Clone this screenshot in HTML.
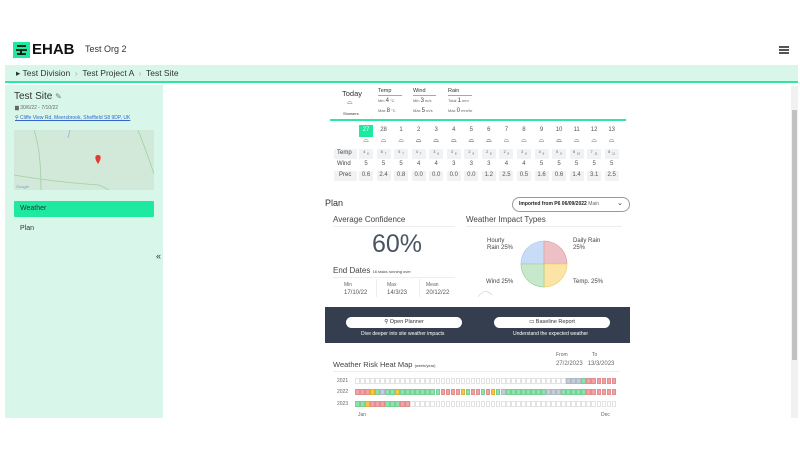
<!DOCTYPE html>
<html><head><meta charset="utf-8"><style>
*{margin:0;padding:0;box-sizing:border-box}
body{width:800px;height:450px;background:#fff;font-family:"Liberation Sans",sans-serif;color:#444;position:relative;overflow:hidden}
.a{position:absolute;white-space:nowrap}
.s{font-size:5px;color:#666}
.hm{position:absolute;left:355px;display:flex;height:6px}
.hm i{display:block;width:4.6px;height:6px;margin-right:0.45px;border:0.6px solid #e2e2e2;background:#fff}
.hm i.r{background:#f2a2a2;border-color:#e08e8e}
.hm i.g{background:#8ee3ac;border-color:#76cf95}
.hm i.y{background:#f5c842;border-color:#e0b030}
.hm i.b{background:#c5cdd9;border-color:#b0b9c6}
.col{position:absolute;width:14px;text-align:center;font-size:6px;color:#555}
.cell{position:absolute;width:14px;height:10px;background:#f1f2f4;border-radius:1px}
</style></head><body>
<!-- header -->
<div class="a" style="left:13px;top:42px;width:17px;height:16px;background:#1de9a0"></div>
<svg class="a" style="left:13px;top:42px" width="17" height="16"><path d="M4 4H13M3 8H14M4 12H13M8 8V13" stroke="#111" stroke-width="1.8" fill="none"/></svg>
<div class="a" style="left:32px;top:41px;font-size:15px;font-weight:bold;color:#111">EHAB</div>
<div class="a" style="left:85px;top:44px;font-size:9px;color:#333">Test Org 2</div>
<div class="a" style="left:779px;top:46px;width:10px;height:1.5px;background:#555;box-shadow:0 3px 0 #555,0 6px 0 #555"></div>
<!-- breadcrumb -->
<div class="a" style="left:5px;top:65px;width:793px;height:18px;background:#d8f7ea;border-bottom:2px solid #2ee6a2"></div>
<div class="a" style="left:16px;top:68px;font-size:8.5px;color:#333">▸ Test Division &nbsp;<span style="color:#aaa">›</span>&nbsp; Test Project A &nbsp;<span style="color:#aaa">›</span>&nbsp; Test Site</div>
<!-- sidebar -->
<div class="a" style="left:5px;top:85px;width:158px;height:333px;background:#d8f7ea"></div>
<div class="a" style="left:14px;top:91px;font-size:10px;color:#333">Test Site <span style="font-size:8px;color:#777">✎</span></div>
<div class="a s" style="left:15px;top:105px">▆ 30/6/22 - 7/10/22</div>
<div class="a s" style="left:15px;top:115px;color:#3366cc;text-decoration:underline"><span style="color:#555;text-decoration:none">⚲</span> Cliffe View Rd, Meersbrook, Sheffield S8 9DP, UK</div>
<div class="a" style="left:14px;top:130px;width:140px;height:60px;background:#d2e8d8;overflow:hidden">
<svg width="140" height="60"><path d="M20 0 Q27 20 27 60" stroke="#9fd0a6" fill="none" stroke-width="0.8"/><path d="M0 45 Q40 52 85 55 L95 60" stroke="#9fd0a6" fill="none" stroke-width="0.8"/><path d="M124 0 Q132 20 140 44" stroke="#9fd0a6" fill="none" stroke-width="0.8"/><path d="M56 0 L54 8" stroke="#8ab4e8" stroke-width="0.8"/><path d="M84 34 C80 28 81 25 84 25 C87 25 88 28 84 34Z" fill="#e53935"/><text x="2" y="58" font-size="4" fill="#7a9ad8" font-family="Liberation Sans">Google</text></svg></div>
<div class="a" style="left:14px;top:201px;width:140px;height:16px;background:#1de9a0;border-radius:1px"></div>
<div class="a" style="left:20px;top:205px;font-size:7px;color:#333">Weather</div>
<div class="a" style="left:20px;top:225px;font-size:7px;color:#333">Plan</div>
<div class="a" style="left:156px;top:251px;font-size:9px;color:#333">«</div>
<!-- scrollbar -->
<div class="a" style="left:791px;top:86px;width:7px;height:332px;background:#f1f1f1"></div>
<div class="a" style="left:792px;top:110px;width:5px;height:250px;background:#c1c1c1"></div>
<!-- today -->
<div class="a" style="left:342px;top:89px;font-size:7.5px;color:#333">Today</div>
<div class="a" style="left:347px;top:99px;font-size:7px;color:#777">⌓</div>
<div class="a" style="left:343px;top:111px;font-size:4px;color:#333">Showers</div>
<div class="a" style="left:378px;top:88px;font-size:5.5px;color:#333">Temp</div>
<div class="a" style="left:378px;top:95px;width:24px;height:1px;background:#2ee6a2"></div>
<div class="a s" style="left:378px;top:98px;font-size:4px">Min <span style="font-size:6px;color:#444">4</span> °C</div>
<div class="a s" style="left:378px;top:108px;font-size:4px">Max <span style="font-size:6px;color:#444">8</span> °C</div>
<div class="a" style="left:413px;top:88px;font-size:5.5px;color:#333">Wind</div>
<div class="a" style="left:413px;top:95px;width:23px;height:1px;background:#2ee6a2"></div>
<div class="a s" style="left:413px;top:98px;font-size:4px">Min <span style="font-size:6px;color:#444">3</span> m/s</div>
<div class="a s" style="left:413px;top:108px;font-size:4px">Max <span style="font-size:6px;color:#444">5</span> m/s</div>
<div class="a" style="left:448px;top:88px;font-size:5.5px;color:#333">Rain</div>
<div class="a" style="left:448px;top:95px;width:24px;height:1px;background:#2ee6a2"></div>
<div class="a s" style="left:448px;top:98px;font-size:4px">Total <span style="font-size:6px;color:#444">1</span> mm</div>
<div class="a s" style="left:448px;top:108px;font-size:4px">Max <span style="font-size:6px;color:#444">0</span> mm/hr</div>
<div class="a" style="left:330px;top:119px;width:296px;height:1.5px;background:#2ee6a2"></div>
<!-- grid -->
<div class="a" style="left:359px;top:125px;width:14px;height:12px;background:#1de9a0"></div>
<div class="cell" style="left:334px;top:149px;width:23px"></div>
<div class="cell" style="left:334px;top:171px;width:23px"></div>
<div class="a" style="left:337px;top:150px;font-size:6px">Temp</div>
<div class="a" style="left:337px;top:161px;font-size:6px">Wind</div>
<div class="a" style="left:339px;top:172px;font-size:6px">Prec</div>
<div id="g"></div>
<!-- plan -->
<div class="a" style="left:325px;top:198px;font-size:9px;color:#333">Plan</div>
<div class="a" style="left:512px;top:197px;width:118px;height:15px;border:1px solid #999;border-radius:8px"></div>
<div class="a" style="left:519px;top:201px;font-size:5px;font-weight:bold;color:#222">Imported from P6 06/09/2022 <span style="font-weight:normal;color:#666">Main</span></div>
<div class="a" style="left:617px;top:199px;font-size:7px;color:#333">⌄</div>
<div class="a" style="left:333px;top:215px;font-size:8px;color:#444">Average Confidence</div>
<div class="a" style="left:333px;top:226px;width:122px;height:1px;background:#eee"></div>
<div class="a" style="left:372px;top:230px;font-size:25px;color:#4a5362">60%</div>
<div class="a" style="left:333px;top:266px;font-size:8px;color:#444">End Dates <span style="font-size:4px">16 tasks running over</span></div>
<div class="a" style="left:333px;top:277px;width:122px;height:1px;background:#eee"></div>
<div class="a" style="left:376px;top:279px;width:1px;height:18px;background:#eee"></div>
<div class="a" style="left:419px;top:279px;width:1px;height:18px;background:#eee"></div>
<div class="a s" style="left:344px;top:282px">Min</div><div class="a s" style="left:387px;top:282px">Max</div><div class="a s" style="left:426px;top:282px">Mean</div>
<div class="a" style="left:344px;top:290px;font-size:6px;color:#555">17/10/22</div>
<div class="a" style="left:387px;top:290px;font-size:6px;color:#555">14/3/23</div>
<div class="a" style="left:426px;top:290px;font-size:6px;color:#555">20/12/22</div>
<div class="a" style="left:466px;top:215px;font-size:8px;color:#444">Weather Impact Types</div>
<div class="a" style="left:466px;top:226px;width:156px;height:1px;background:#eee"></div>
<svg class="a" style="left:470px;top:235px" width="150" height="65"><path d="M74 29 V6 A23 23 0 0 0 51 29Z" fill="#c8dcf8" stroke="#a8c4ee" stroke-width="0.6"/><path d="M74 29 V6 A23 23 0 0 1 97 29Z" fill="#ecc0c4" stroke="#d89aa0" stroke-width="0.6"/><path d="M74 29 H97 A23 23 0 0 1 74 52Z" fill="#fbe4a6" stroke="#f0cc60" stroke-width="0.6"/><path d="M74 29 V52 A23 23 0 0 1 51 29Z" fill="#c8e8cc" stroke="#8ccf96" stroke-width="0.6"/><path d="M8 62 Q15 52 22 60" stroke="#ccc" fill="none" stroke-width="0.6"/></svg>
<div class="a" style="left:487px;top:238px;font-size:6px;line-height:7px;color:#444">Hourly<br>Rain 25%</div>
<div class="a" style="left:573px;top:238px;font-size:6px;line-height:7px;color:#444">Daily Rain<br>25%</div>
<div class="a" style="left:486px;top:279px;font-size:6px;color:#444">Wind 25%</div>
<div class="a" style="left:573px;top:279px;font-size:6px;color:#444">Temp. 25%</div>
<!-- dark panel -->
<div class="a" style="left:325px;top:307px;width:305px;height:36px;background:#353e4e"></div>
<div class="a" style="left:346px;top:317px;width:116px;height:11px;background:#fff;border-radius:6px;font-size:5.5px;text-align:center;line-height:11px;color:#333">⚲ Open Planner</div>
<div class="a" style="left:494px;top:317px;width:116px;height:11px;background:#fff;border-radius:6px;font-size:5.5px;text-align:center;line-height:11px;color:#333">▭ Baseline Report</div>
<div class="a" style="left:361px;top:331px;font-size:5px;color:#fff">Dive deeper into site weather impacts</div>
<div class="a" style="left:513px;top:331px;font-size:5px;color:#fff">Understand the expected weather</div>
<!-- heat map -->
<div class="a" style="left:333px;top:360px;font-size:7.5px;color:#444">Weather Risk Heat Map <span style="font-size:4px">(week/year)</span></div>
<div class="a s" style="left:556px;top:352px">From</div><div class="a s" style="left:592px;top:352px">To</div>
<div class="a" style="left:556px;top:361px;font-size:6px;color:#666">27/2/2023 &nbsp; 13/3/2023</div>
<div class="a" style="left:333px;top:371px;width:287px;height:1px;background:#eee"></div>
<div class="a s" style="left:337px;top:378px">2021</div>
<div class="a s" style="left:337px;top:389px">2022</div>
<div class="a s" style="left:337px;top:401px">2023</div>
<div class="hm" style="top:378px" id="h1"></div>
<div class="hm" style="top:389px" id="h2"></div>
<div class="hm" style="top:401px" id="h3"></div>
<div class="a s" style="left:358px;top:412px">Jan</div>
<div class="a s" style="left:601px;top:412px">Dec</div>
<script>
var d=["27","28","1","2","3","4","5","6","7","8","9","10","11","12","13"];
var t=[[4,8],[8,7],[5,7],[4,7],[3,8],[3,8],[2,8],[2,8],[2,8],[3,8],[4,8],[5,9],[8,10],[7,11],[8,11]];
var w=[5,5,5,4,4,3,3,3,4,4,5,5,5,5,5];
var p=["0.6","2.4","0.8","0.0","0.0","0.0","0.0","1.2","2.5","0.5","1.6","0.6","1.4","3.1","2.5"];
var dark=[0,0,0,1,1,1,1,1,0,0,0,1,0,0,0];
var h="";
for(var i=0;i<15;i++){var x=359+i*17.55;
h+='<div class="col" style="left:'+x+'px;top:127px;color:'+(i?'#555':'#fff')+'">'+d[i]+'</div>';
h+='<div class="col" style="left:'+x+'px;top:137px;font-size:7px;color:'+(dark[i]?'#444':'#777')+'">⌓</div>';
h+='<div class="cell" style="left:'+x+'px;top:149px"></div>';
h+='<div class="col" style="left:'+x+'px;top:150px;font-size:3.5px">'+t[i][0]+'&nbsp;&nbsp;<sub>'+t[i][1]+'</sub></div>';
h+='<div class="col" style="left:'+x+'px;top:161px">'+w[i]+'</div>';
h+='<div class="cell" style="left:'+x+'px;top:171px"></div>';
h+='<div class="col" style="left:'+x+'px;top:172px">'+p[i]+'</div>';}
document.getElementById("g").innerHTML=h;
function row(id,s){var o="";for(var i=0;i<52;i++){var c=s[i]||"e";o+='<i class="'+c+'"></i>';}document.getElementById(id).innerHTML=o;}
row("h1","eeeeeeeeeeeeeeeeeeeeeeeeeeeeeeeeeeeeeeeeeebbbgrrrrrr");
row("h2","rrrygbggyggggggggrrrrygrrgrygbggggggggbbbgggggrrrrrr");
row("h3","ggyrrrgggrr");
</script>
</body></html>
